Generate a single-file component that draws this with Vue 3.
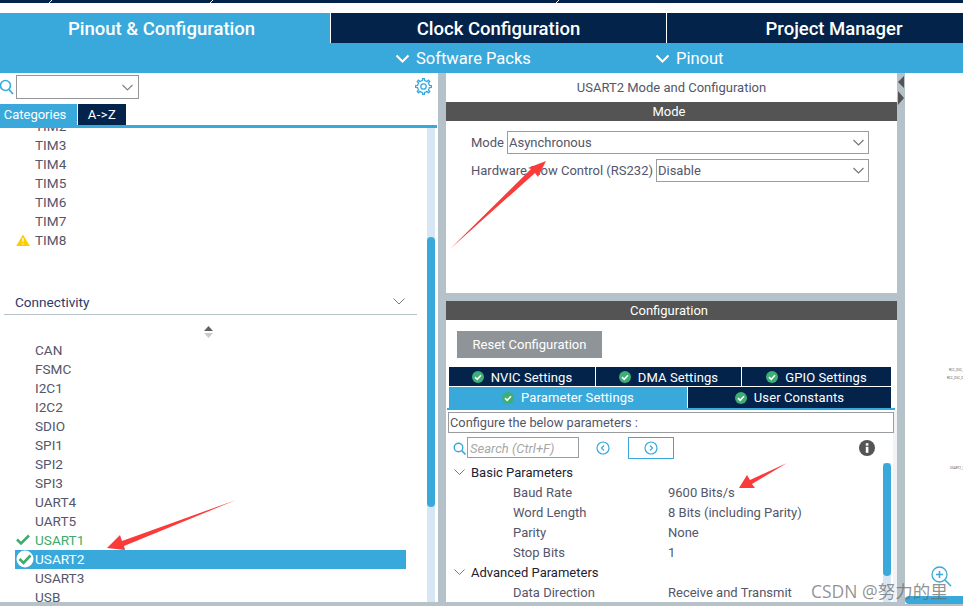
<script setup>
const timers = ['TIM2', 'TIM3', 'TIM4', 'TIM5', 'TIM6', 'TIM7', 'TIM8']
const conns = ['CAN', 'FSMC', 'I2C1', 'I2C2', 'SDIO', 'SPI1', 'SPI2', 'SPI3', 'UART4', 'UART5', 'USART1', 'USART2', 'USART3', 'USB']
const params = [
  { group: 'Basic Parameters' },
  { label: 'Baud Rate', value: '9600 Bits/s' },
  { label: 'Word Length', value: '8 Bits (including Parity)' },
  { label: 'Parity', value: 'None' },
  { label: 'Stop Bits', value: '1' },
  { group: 'Advanced Parameters' },
  { label: 'Data Direction', value: 'Receive and Transmit' }
]
const topTabs = [
  { t: 'NVIC Settings', w: 146 },
  { t: 'DMA Settings', w: 145 },
  { t: 'GPIO Settings', w: 149 }
]
const gearPath = (() => {
  const pts = []
  const teeth = 8
  for (let i = 0; i < teeth; i++) {
    const a = (i / teeth) * Math.PI * 2
    const step = (Math.PI * 2) / teeth
    const spec = [[-0.5, 6], [-0.22, 6], [-0.14, 8], [0.14, 8], [0.22, 6]]
    for (const [o, r] of spec) {
      const b = a + o * step
      pts.push((8.5 + r * Math.cos(b)).toFixed(2) + ' ' + (8.5 + r * Math.sin(b)).toFixed(2))
    }
  }
  return 'M' + pts.join('L') + 'z'
})()
</script>

<template>
  <div class="root">
    <div class="strip">
      <svg width="963" height="3" class="block"><path d="M52 0l-3 3M213 0l-3 3M559 0l-3 3" stroke="#fff" stroke-width="1" fill="none" /></svg>
    </div>
    <div class="gap10"></div>
    <div class="tabs">
      <div class="tab active t1">Pinout &amp; Configuration</div>
      <div class="tab t2">Clock Configuration</div>
      <div class="tab t3">Project Manager</div>
    </div>
    <div class="subbar">
      <div class="sub s1">
        <svg width="15" height="9" viewBox="0 0 15 9"><path d="M1.500 1.500l6 6 6-6" fill="none" stroke="#fff" stroke-width="2" /></svg>
        <span>Software Packs</span>
      </div>
      <div class="sub s2">
        <svg width="15" height="9" viewBox="0 0 15 9"><path d="M1.500 1.500l6 6 6-6" fill="none" stroke="#fff" stroke-width="2" /></svg>
        <span>Pinout</span>
      </div>
    </div>

    <div class="main">
      <section class="left">
        <div class="toolbar">
          <svg class="lens" width="14" height="16" viewBox="0 0 14 16"><circle cx="5.500" cy="6.500" r="5" fill="none" stroke="#39a9dc" stroke-width="1.600" /><path d="M9 10.500l4 4.500" stroke="#39a9dc" stroke-width="1.800" /></svg>
          <div class="combo">
            <svg class="chev" width="11" height="7" viewBox="0 0 11 7"><path d="M.5 1l5 5 5-5" fill="none" stroke="#808488" stroke-width="1.200" /></svg>
          </div>
          <svg class="gear" width="17" height="17" viewBox="0 0 17 17" fill="none" stroke="#39a9dc" stroke-width="1.300">
            <circle cx="8.500" cy="8.500" r="2.700" />
            <path :d="gearPath" />
          </svg>
        </div>
        <div class="cat-tabs">
          <div class="cat on">Categories</div>
          <div class="cat off">A-&gt;Z</div>
        </div>
        <div class="cat-line"></div>
        <div class="list-wrap">
          <div class="list">
            <div class="row" v-for="(n, i) in timers" :key="n" :class="{ first0: i === 0 }">
              <span class="slot">
                <svg v-if="n === 'TIM8'" width="14" height="12" viewBox="0 0 14 12"><path d="M7 .5L13.800 12H.2z" fill="#fc0" /><path d="M7 4v4M7 9.200v1.300" stroke="#fff" stroke-width="1.300" /></svg>
              </span>{{ n }}
            </div>
            <div class="section">
              <span>Connectivity</span>
              <svg width="12" height="7" viewBox="0 0 12 7"><path d="M.5 .5l5.500 5.500 5.500-5.500" fill="none" stroke="#777b80" stroke-width="1" /></svg>
            </div>
            <div class="sort">
              <svg width="9" height="12" viewBox="0 0 9 12" class="block"><path d="M4.500 0L9 5H0z" fill="#5e6266" /><path d="M4.500 12L0 7h9z" fill="#c9cbcd" /></svg>
            </div>
            <div v-for="n in conns" :key="n" class="row" :class="{ green: n === 'USART1', sel: n === 'USART2' }">
              <span class="slot">
                <svg v-if="n === 'USART1'" width="14" height="11" viewBox="0 0 14 11"><path d="M1 5.500l4 4 8-8" fill="none" stroke="#3cab6c" stroke-width="2.500" /></svg>
                <svg v-if="n === 'USART2'" width="18" height="18" viewBox="0 0 18 18"><circle cx="9" cy="9" r="8.500" fill="#fff" /><path d="M3.500 9l4 4 7-7.500" fill="none" stroke="#3cab6c" stroke-width="2.600" /></svg>
              </span>{{ n }}
            </div>
          </div>
          <div class="track"><div class="thumb thumb-l"></div></div>
        </div>
      </section>

      <div class="divider"></div>

      <section class="mid">
        <div class="pane-top">
          <div class="pane-title">USART2 Mode and Configuration</div>
          <div class="bar">Mode</div>
          <div class="form-row r1">
            <label>Mode</label>
            <div class="select">Asynchronous
              <svg class="sel-chev" width="11" height="7" viewBox="0 0 11 7"><path d="M.5 1l5 5 5-5" fill="none" stroke="#707478" stroke-width="1.100" /></svg>
            </div>
          </div>
          <div class="form-row r2">
            <label>Hardware Flow Control (RS232)</label>
            <div class="select">Disable
              <svg class="sel-chev" width="11" height="7" viewBox="0 0 11 7"><path d="M.5 1l5 5 5-5" fill="none" stroke="#707478" stroke-width="1.100" /></svg>
            </div>
          </div>
        </div>

        <div class="pane-conf">
          <div class="bar">Configuration</div>
          <button class="reset">Reset Configuration</button>
          <div class="stabs">
            <div class="stab-row h19">
              <div v-for="t in topTabs" :key="t.t" class="stab" :style="{ width: t.w + 'px' }">
                <svg width="12" height="12" viewBox="0 0 12 12"><circle cx="6" cy="6" r="6" fill="#3dae74" /><path d="M3 6.100l2.200 2.200 3.800-4" fill="none" stroke="#fff" stroke-width="1.600" /></svg>
                {{ t.t }}
              </div>
            </div>
            <div class="stab-row h21">
              <div class="stab on" style="width: 238px">
                <svg width="12" height="12" viewBox="0 0 12 12"><circle cx="6" cy="6" r="6" fill="#3dae74" /><path d="M3 6.100l2.200 2.200 3.800-4" fill="none" stroke="#fff" stroke-width="1.600" /></svg>
                Parameter Settings
              </div>
              <div class="stab" style="width: 203px">
                <svg width="12" height="12" viewBox="0 0 12 12"><circle cx="6" cy="6" r="6" fill="#3dae74" /><path d="M3 6.100l2.200 2.200 3.800-4" fill="none" stroke="#fff" stroke-width="1.600" /></svg>
                User Constants
              </div>
            </div>
          </div>
          <div class="stab-line"></div>
          <div class="body">
            <div class="configure">Configure the below parameters :</div>
            <div class="search-row">
              <svg class="lens2" width="13" height="13" viewBox="0 0 13 13"><circle cx="5.500" cy="5.500" r="4.300" fill="none" stroke="#39a9dc" stroke-width="1.400" /><path d="M8.500 8.500l4 4" stroke="#39a9dc" stroke-width="1.600" /></svg>
              <div class="search">Search (Ctrl+F)</div>
              <svg class="prev" width="14" height="14" viewBox="0 0 14 14"><circle cx="7" cy="7" r="6" fill="none" stroke="#39a9dc" stroke-width="1.200" /><path d="M8 4.500L5.500 7 8 9.500" fill="none" stroke="#39a9dc" stroke-width="1.200" /></svg>
              <div class="next">
                <svg width="14" height="14" viewBox="0 0 14 14"><circle cx="7" cy="7" r="6" fill="none" stroke="#39a9dc" stroke-width="1.200" /><path d="M6 4.500L8.500 7 6 9.500" fill="none" stroke="#39a9dc" stroke-width="1.200" /></svg>
              </div>
              <svg class="info" width="16" height="16" viewBox="0 0 16 16"><circle cx="8" cy="8" r="8" fill="#535453" /><rect x="6.800" y="6.800" width="2.600" height="6" fill="#fff" /><rect x="6.800" y="3.200" width="2.600" height="2.400" fill="#fff" /></svg>
            </div>
            <div class="param-wrap">
              <div class="params">
                <template v-for="p in params" :key="p.group || p.label">
                  <div v-if="p.group" class="prow group">
                    <svg width="11" height="6" viewBox="0 0 11 6"><path d="M.5 .5l5 5 5-5" fill="none" stroke="#777b80" stroke-width="1" /></svg>
                    <span>{{ p.group }}</span>
                  </div>
                  <div v-else class="prow">
                    <span class="plabel">{{ p.label }}</span>
                    <span class="pvalue">{{ p.value }}</span>
                  </div>
                </template>
              </div>
              <div class="track2"><div class="thumb thumb-r"></div></div>
            </div>
          </div>
        </div>
      </section>

      <div class="divider">
        <svg width="8" height="34" viewBox="0 0 8 34" class="block"><path d="M7 2v12L1 8z" fill="#535453" /><path d="M1 17v14l6-7z" fill="#535453" /></svg>
      </div>

      <section class="right">
        <span class="pin p1">RCC_OSC_IN</span>
        <span class="pin p2">RCC_OSC_OUT</span>
        <span class="pin p3">USART2_TX</span>
        <svg class="zoomer" width="21" height="21" viewBox="0 0 21 21"><circle cx="8.500" cy="8.500" r="7.500" fill="none" stroke="#39a9dc" stroke-width="1.300" /><path d="M14 14l6 6" stroke="#39a9dc" stroke-width="1.500" /><path d="M5 8.500h7M8.500 5v7" stroke="#39a9dc" stroke-width="1.500" /></svg>
        <div class="hbar"></div>
      </section>
    </div>

    <svg class="arrows" width="963" height="609" viewBox="0 0 963 609">
      <path d="M450 249L531 169 528 168 546 161 538 177 535 173z" fill="#fb3a3a" />
      <path d="M236 500L122 541 120 535 107 548 125 550 124 546z" fill="#fb3a3a" />
      <path d="M787 463L750 480 747 475 739 488 755 488 752 484z" fill="#fb3a3a" />
    </svg>
    <div class="watermark">CSDN @努力的里</div>
  </div>
</template>

<style>
html, body { margin: 0; padding: 0; background: #fff; }
</style>

<style scoped>
.root {
  position: relative;
  width: 963px;
  height: 609px;
  overflow: hidden;
  background: #fff;
  font-family: Roboto, "Liberation Sans", sans-serif;
  color: #54566a;
}
.block { display: block; }
.strip { height: 3px; background: #03234b; }
.gap10 { height: 10px; }
.tabs { display: flex; height: 30px; }
.tab {
  display: flex;
  align-items: center;
  justify-content: center;
  background: #03234b;
  color: #fff;
  font-size: 18.500px;
  font-weight: 500;
  box-sizing: border-box;
  padding-top: 2px;
}
.tab.active { background: #39a9dc; }
.t1 { width: 330px; padding-right: 7px; }
.t2 { width: 335px; margin-left: 1px; }
.t3 { width: 296px; margin-left: 1px; padding-left: 38px; }
.subbar {
  display: flex;
  height: 30px;
  background: #39a9dc;
  color: #fff;
  font-size: 16.500px;
}
.sub { display: flex; align-items: center; gap: 6px; }
.s1 { margin-left: 395px; width: 260px; }
.s2 { width: 200px; }

.main {
  display: flex;
  align-items: flex-start;
  height: 533px;
  background: #b6c2ca;
}
.left, .mid { height: 529px; background: #fff; }
.left { width: 438px; display: flex; flex-direction: column; }
.divider { width: 8px; flex: none; padding-top: 1px; }
.toolbar { position: relative; height: 31px; box-sizing: border-box; display: flex; align-items: flex-start; }
.lens { margin-top: 6px; }
.combo {
  position: relative;
  margin: 2px 0 0 2px;
  width: 123px;
  height: 24px;
  box-sizing: border-box;
  border: 1px solid #939699;
}
.chev { position: absolute; right: 5px; top: 8px; }
.gear { margin: 5px 0 0 276px; }
.cat-tabs { display: flex; height: 21px; font-size: 13px; color: #fff; }
.cat { display: flex; align-items: center; justify-content: center; box-sizing: border-box; }
.cat.on { width: 77px; padding-right: 7px; background: #39a9dc; }
.cat.off { width: 48px; margin-left: 1px; letter-spacing: .4px; background: #03234b; }
.cat-line { height: 3px; width: 437px; background: #39a9dc; }
.list-wrap { flex: 1; min-height: 0; display: flex; }
.list { width: 427px; overflow: hidden; }
.row {
  display: flex;
  align-items: center;
  height: 19px;
  width: 391px;
  margin-left: 15px;
  padding-bottom: 2px;
  box-sizing: border-box;
  font-size: 13.600px;
  color: #54566a;
}
.first0 { margin-top: -11px; }
.slot { width: 20px; height: 17px; flex: none; display: flex; align-items: center; justify-content: flex-start; padding-left: 1px; box-sizing: border-box; }
.green { color: #3cab6c; }
.sel { background: #39a9dc; color: #fff; }
.section {
  display: flex;
  align-items: center;
  justify-content: space-between;
  margin: 43px 0 0 4px;
  width: 413px;
  height: 22px;
  padding: 0 12px 4px 11px;
  box-sizing: border-box;
  border-bottom: 1px solid #b6c2ca;
  font-size: 13.600px;
  color: #2c3a68;
}
.sort { display: flex; justify-content: center; padding: 11px 0 0 0; width: 417px; height: 15px; }
.track { width: 8px; background: #d7e6f4; position: relative; }
.thumb { background: #39a9dc; border-radius: 4px; }
.thumb-l { height: 270px; margin-top: 109px; }

.pane-top { height: 220px; background: #fff; display: flex; flex-direction: column; }
.mid { width: 451px; display: flex; flex-direction: column; gap: 8px; background: #b6c2ca; }
.pane-title { height: 29px; box-sizing: border-box; display: flex; align-items: center; justify-content: center; font-size: 13px; }
.bar {
  flex: none;
  height: 19px;
  box-sizing: border-box;
  padding: 0 5px 0 0;
  background: #535453;
  color: #fff;
  font-size: 13px;
  display: flex;
  align-items: center;
  justify-content: center;
}
.form-row { display: flex; align-items: center; padding: 0 28px 0 25px; font-size: 13px; gap: 3px; }
.form-row label { white-space: nowrap; }
.r1 { margin-top: 10px; }
.r2 { margin-top: 5px; }
.select {
  position: relative;
  flex: 1;
  height: 23px;
  box-sizing: border-box;
  border: 1px solid #9a9da0;
  padding-left: 1px;
  display: flex;
  align-items: center;
  font-size: 13px;
}
.sel-chev { position: absolute; right: 4px; top: 7px; }

.pane-conf { flex: 1; min-height: 0; background: #fff; display: flex; flex-direction: column; overflow: hidden; }
.reset {
  flex: none;
  display: block;
  margin: 11px 0 0 11px;
  width: 145px;
  height: 27px;
  background: #8f9499;
  border: 0;
  padding: 0;
  color: #fff;
  font: inherit;
  font-size: 13px;
}
.stabs { flex: none; margin: 9px 0 0 3px; display: flex; flex-direction: column; gap: 1px; }
.stab-row { display: flex; gap: 1px; }
.h19 { height: 19px; }
.h21 { height: 21px; }
.stab {
  display: flex;
  align-items: center;
  justify-content: center;
  gap: 7px;
  background: #03234b;
  color: #fff;
  font-size: 13px;
  letter-spacing: .1px;
  box-sizing: border-box;
}
.h19 .stab { padding-top: 1px; }
.stab.on { background: #39a9dc; }
.stab-line { flex: none; height: 2px; width: 448px; margin-left: 1px; background: #39a9dc; }
.body { flex: 1; min-height: 0; display: flex; flex-direction: column; border-right: 4px solid #f1f4f6; }
.configure {
  flex: none;
  margin: 2px 0 0 2px;
  width: 446px;
  height: 21px;
  box-sizing: border-box;
  border: 1px solid #9a9da0;
  display: flex;
  align-items: center;
  padding: 0 0 0 1px;
  font-size: 12.800px;
}
.search-row { flex: none; display: flex; align-items: flex-start; height: 22px; margin-top: 4px; }
.lens2 { margin: 5px 0 0 7px; }
.search {
  margin-left: 1px;
  width: 112px;
  height: 21px;
  box-sizing: border-box;
  border: 1px solid #9a9da0;
  display: flex;
  align-items: center;
  padding: 1px 0 0 2px;
  font-size: 13px;
  font-style: italic;
  color: #a8a8a8;
}
.prev { margin: 4px 0 0 17px; }
.next {
  margin-left: 18px;
  width: 46px;
  height: 22px;
  box-sizing: border-box;
  border: 1px solid #39a9dc;
  display: flex;
  align-items: center;
  justify-content: center;
}
.info { margin: 3px 0 0 185px; }
.param-wrap { flex: 1; min-height: 0; display: flex; overflow: hidden; margin-top: 3px; }
.params { width: 437px; }
.prow { display: flex; align-items: center; height: 20px; font-size: 13px; color: #54566a; white-space: nowrap; }
.group { color: #1d2130; }
.group svg { margin: 0 6px 0 8px; flex: none; }
.plabel { width: 155px; margin-left: 67px; }
.track2 { width: 8px; margin-top: 1px; background: #d7e6f4; }
.thumb-r { height: 113px; }

.right { position: relative; width: 58px; height: 531px; background: #fff; display: flex; flex-direction: column; }
.pin {
  position: absolute;
  font-size: 3px;
  line-height: 4px;
  white-space: nowrap;
  color: #555;
}
.p1 { left: 44px; top: 295px; }
.p2 { left: 42px; top: 303px; }
.p3 { left: 45px; top: 393px; }
.zoomer { position: absolute; left: 26px; top: 493px; }
.hbar { margin-top: auto; height: 8px; background: #39a9dc; border-radius: 4px 0 0 4px; }

.arrows { position: absolute; left: 0; top: 0; pointer-events: none; }
.watermark {
  position: absolute;
  left: 811px;
  top: 580px;
  font-family: "Open Sans", "Noto Sans CJK SC", sans-serif;
  font-size: 17.500px;
  line-height: 22px;
  color: rgba(110, 110, 110, .75);
  white-space: nowrap;
}
</style>
